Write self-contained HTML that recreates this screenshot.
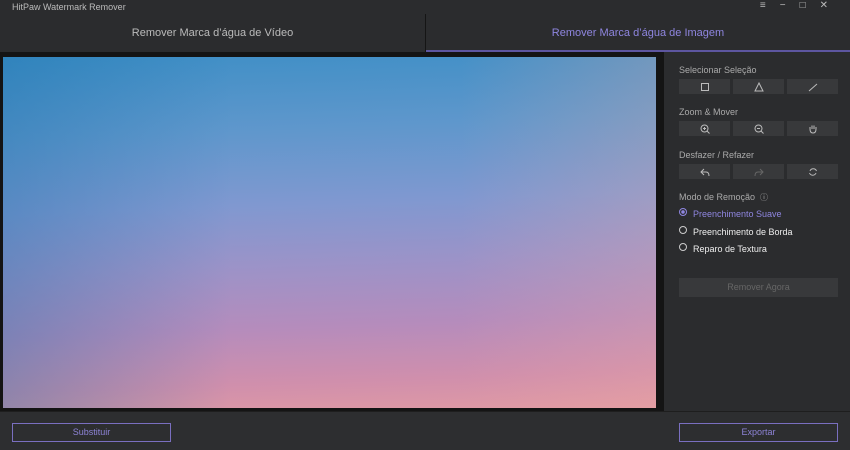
<!DOCTYPE html>
<html><head><meta charset="utf-8"><style>
*{margin:0;padding:0;box-sizing:border-box}
body{width:850px;height:450px;background:#2d2e30;font-family:"Liberation Sans",sans-serif;position:relative;overflow:hidden;color:#ccc}
.abs{position:absolute}
.title{left:0;top:0;width:850px;height:14px;background:#2b2c2e;font-size:9px;color:#bbb;padding:2px 0 0 12px}
.tabs{top:14px;left:0;width:850px;height:38px;background:#2b2c2e}
.tab{position:absolute;top:0;height:38px;line-height:38px;text-align:center;font-size:11px}
.frame{left:0;top:52px;width:664px;height:360px;background:#141414}
.img{left:3px;top:57px;width:653px;height:351px;
background:
linear-gradient(90deg,rgba(20,110,170,.35) 0%,rgba(0,0,0,0) 35%,rgba(0,0,0,0) 70%,rgba(240,170,160,.25) 100%),
linear-gradient(178deg,#3f8fc6 0%,#5f97cc 22%,#8098d0 42%,#9b93c8 58%,#b58cbc 75%,#d08fac 90%,#e09aa4 100%)}
.side{left:664px;top:52px;width:186px;height:360px;background:#2b2c2e}
.lbl{position:absolute;left:15px;font-size:9px;color:#aaa}
.btn{position:absolute;width:51px;height:15px;background:#38393b;display:flex;align-items:center;justify-content:center}
.radio{position:absolute;left:15px;font-size:9px;color:#eee;display:flex;align-items:center}
.radio i{display:inline-block;width:8px;height:8px;border:1px solid #ccc;border-radius:50%;margin-right:6px;margin-top:-4px}
.bb{position:absolute;top:423px;width:159px;height:19px;border:1px solid #7a6fc0;color:#8d83d6;font-size:9px;text-align:center;line-height:17px}
</style></head><body>
<div class="abs title">HitPaw Watermark Remover</div>
<div class="abs" style="right:8px;top:0;font-size:10px;color:#bbb;letter-spacing:14px">≡−□✕</div>
<div class="abs tabs">
<div class="tab" style="left:0;width:425px;color:#bbb">Remover Marca d’água de Vídeo</div>
<div class="abs" style="left:425px;top:0;width:1px;height:38px;background:#151515"></div>
<div class="tab" style="left:426px;width:424px;color:#8f86e0">Remover Marca d’água de Imagem</div>
<div class="abs" style="left:426px;top:36px;width:424px;height:2px;background:#5d56a0"></div>
</div>
<div class="abs frame"></div>
<div class="abs img"></div>
<div class="abs side">
<div class="lbl" style="top:13px">Selecionar Seleção</div>
<div class="btn" style="left:15px;top:27px"><svg width="10" height="10"><rect x="1.5" y="1.5" width="7" height="7" fill="none" stroke="#bbb"/></svg></div>
<div class="btn" style="left:69px;top:27px"><svg width="10" height="10"><path d="M5 1L9 9H1Z" fill="none" stroke="#bbb"/></svg></div>
<div class="btn" style="left:123px;top:27px"><svg width="10" height="10"><path d="M1 9L9 2" stroke="#bbb"/></svg></div>
<div class="lbl" style="top:55px">Zoom &amp; Mover</div>
<div class="btn" style="left:15px;top:69px"><svg width="10" height="10"><circle cx="4.5" cy="4.5" r="3.5" fill="none" stroke="#bbb"/><path d="M7 7L9.5 9.5M3 4.5H6M4.5 3V6" stroke="#bbb"/></svg></div>
<div class="btn" style="left:69px;top:69px"><svg width="10" height="10"><circle cx="4.5" cy="4.5" r="3.5" fill="none" stroke="#bbb"/><path d="M7 7L9.5 9.5M3 4.5H6" stroke="#bbb"/></svg></div>
<div class="btn" style="left:123px;top:69px"><svg width="10" height="10"><path d="M2 5V3M4 5V1.5M6 5V1.5M8 5V3M2 5Q2 9 5 9Q8 9 8 5" fill="none" stroke="#bbb"/></svg></div>
<div class="lbl" style="top:98px">Desfazer / Refazer</div>
<div class="btn" style="left:15px;top:112px"><svg width="10" height="10"><path d="M4 2L1 5L4 8M1 5H6Q9 5 9 9" fill="none" stroke="#bbb"/></svg></div>
<div class="btn" style="left:69px;top:112px"><svg width="10" height="10"><path d="M6 2L9 5L6 8M9 5H4Q1 5 1 9" fill="none" stroke="#666"/></svg></div>
<div class="btn" style="left:123px;top:112px"><svg width="10" height="10"><path d="M2 4A3.5 3.5 0 0 1 8.5 4M8 6A3.5 3.5 0 0 1 1.5 6" fill="none" stroke="#bbb"/></svg></div>
<div class="lbl" style="top:140px">Modo de Remoção &nbsp;<span style="font-size:8px">ⓘ</span></div>
<div class="radio" style="top:157px;color:#8f86e0"><i style="border-color:#8f86e0;background:radial-gradient(#8f86e0 40%,transparent 45%)"></i>Preenchimento Suave</div>
<div class="radio" style="top:175px"><i></i>Preenchimento de Borda</div>
<div class="radio" style="top:192px"><i></i>Reparo de Textura</div>
<div class="abs" style="left:15px;top:226px;width:159px;height:19px;background:#38393b;color:#666;font-size:9px;text-align:center;line-height:19px">Remover Agora</div>
</div>
<div class="abs" style="left:0;top:411px;width:850px;height:1px;background:#1e1e1e"></div>
<div class="bb" style="left:12px">Substituir</div>
<div class="bb" style="left:679px">Exportar</div>
</body></html>
